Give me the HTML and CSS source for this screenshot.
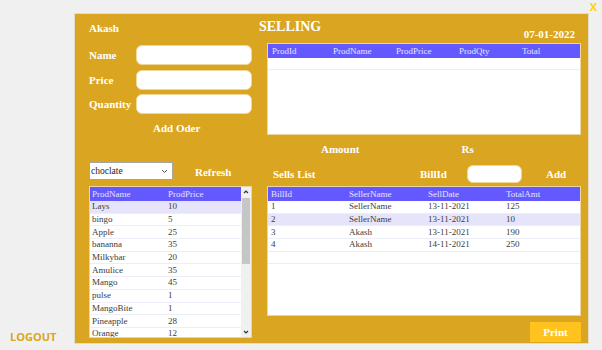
FILE: index.html
```html
<!DOCTYPE html>
<html>
<head>
  <meta name="viewport" content="width=device-width, initial-scale=1.0">
  <title>Selling</title>
  <link rel="stylesheet" href="styles.css">
</head>
<body>
  <div class="topbar"><span class="close">X</span></div>

  <div class="main">
    <div class="side">
      <span class="logout">LOGOUT</span>
    </div>

    <div class="panel">
      <!-- kolom kiri: form + daftar produk -->
      <div class="col-left">
        <div class="user">Akash</div>
        <div class="form">
          <div class="form-row"><label>Name</label><div class="input"></div></div>
          <div class="form-row"><label>Price</label><div class="input"></div></div>
          <div class="form-row"><label>Quantity</label><div class="input"></div></div>
        </div>
        <div class="add-order">Add Oder</div>

        <div class="filter">
          <div class="select">
            <span>choclate</span>
            <svg width="7" height="5" viewBox="0 0 7 5"><path d="M1 1l2.5 2.5L6 1" fill="none" stroke="#555" stroke-width="1"/></svg>
          </div>
          <span class="refresh">Refresh</span>
        </div>

        <div class="grid prod-list">
          <div class="grid-body">
            <div class="row head"><span>ProdName</span><span>ProdPrice</span></div>
            <div class="row sel"><span>Lays</span><span>10</span></div>
            <div class="row"><span>bingo</span><span>5</span></div>
            <div class="row"><span>Apple</span><span>25</span></div>
            <div class="row"><span>bananna</span><span>35</span></div>
            <div class="row"><span>Milkybar</span><span>20</span></div>
            <div class="row"><span>Amulice</span><span>35</span></div>
            <div class="row"><span>Mango</span><span>45</span></div>
            <div class="row"><span>pulse</span><span>1</span></div>
            <div class="row"><span>MangoBite</span><span>1</span></div>
            <div class="row"><span>Pineapple</span><span>28</span></div>
            <div class="row"><span>Orange</span><span>12</span></div>
          </div>
          <div class="scrollbar">
            <svg width="10" height="10" viewBox="0 0 10 10"><path d="M3 6l2-2 2 2" fill="none" stroke="#333" stroke-width="1.2"/></svg>
            <div class="thumb"></div>
            <svg width="10" height="10" viewBox="0 0 10 10"><path d="M3 4l2 2 2-2" fill="none" stroke="#333" stroke-width="1.2"/></svg>
          </div>
        </div>
      </div>

      <!-- kolom kanan: keranjang + daftar penjualan -->
      <div class="col-right">
        <div class="title">
          <h1>SELLING</h1>
          <span class="date">07-01-2022</span>
        </div>

        <div class="grid cart">
          <div class="grid-body">
            <div class="row head"><span>ProdId</span><span>ProdName</span><span>ProdPrice</span><span>ProdQty</span><span>Total</span></div>
            <div class="row"></div>
          </div>
        </div>

        <div class="amount">
          <span class="amt-label">Amount</span>
          <span class="amt-rs">Rs</span>
        </div>

        <div class="sells-bar">
          <span class="sells-title">Sells List</span>
          <span class="bill-label">BillId</span>
          <div class="input small"></div>
          <span class="add">Add</span>
        </div>

        <div class="grid sells">
          <div class="grid-body">
            <div class="row head"><span>BillId</span><span>SellerName</span><span>SellDate</span><span>TotalAmt</span></div>
            <div class="row"><span>1</span><span>SellerName</span><span>13-11-2021</span><span>125</span></div>
            <div class="row sel"><span>2</span><span>SellerName</span><span>13-11-2021</span><span>10</span></div>
            <div class="row"><span>3</span><span>Akash</span><span>13-11-2021</span><span>190</span></div>
            <div class="row"><span>4</span><span>Akash</span><span>14-11-2021</span><span>250</span></div>
            <div class="row"></div>
          </div>
        </div>

        <div class="print-row">
          <button class="print">Print</button>
        </div>
      </div>
    </div>
  </div>
</body>
</html>
```

FILE: styles.css
```css
html, body {
  margin: 0;
  padding: 0;
}
body {
  width: 602px;
  height: 350px;
  overflow: hidden;
  background-color: #f0f0f0;
  font-family: "Liberation Serif", serif;
  color: #ffffff;
}
.topbar {
  height: 13px;
  display: flex;
  justify-content: flex-end;
}
.close {
  font-family: "Open Sans", sans-serif;
  font-weight: bold;
  font-size: 11px;
  line-height: 13px;
  color: #ffd20a;
  padding-right: 5px;
}
.main {
  display: flex;
}
.side {
  width: 74px;
  height: 331px;
  display: flex;
  align-items: flex-end;
}
.logout {
  font-family: "Open Sans", sans-serif;
  font-weight: bold;
  font-size: 11px;
  line-height: 14px;
  color: #daa520;
  padding-left: 10px;
}
.panel {
  box-sizing: border-box;
  width: 515px;
  height: 331px;
  background-color: #daa520;
  border: 1px solid #e2dccb;
  padding: 3px 6px 0 14px;
  display: flex;
  gap: 15px;
}
.col-left {
  width: 163px;
  display: flex;
  flex-direction: column;
}
.col-right {
  width: 314px;
  display: flex;
  flex-direction: column;
}
.user, .form-row label, .add-order, .refresh,
.amount span, .sells-bar span {
  font-weight: bold;
  font-size: 11px;
}
.user {
  margin-top: 3px;
  line-height: 16px;
}
.form {
  margin-top: 9px;
  display: flex;
  flex-direction: column;
  gap: 4.5px;
}
.form-row {
  display: flex;
  align-items: center;
  height: 20px;
}
.form-row label {
  width: 47px;
}
.input {
  box-sizing: border-box;
  width: 116px;
  height: 20px;
  background-color: #ffffff;
  border: 1px solid #eed79a;
  border-radius: 6px;
}
.input.small {
  width: 55px;
  height: 18px;
}
.add-order {
  margin-top: 6px;
  line-height: 16px;
  padding-left: 64px;
}
.filter {
  margin-top: 26px;
  display: flex;
  align-items: center;
  height: 18px;
}
.select {
  box-sizing: border-box;
  width: 84px;
  height: 18px;
  background-color: #ffffff;
  border: 1px solid #a5a5a5;
  display: flex;
  align-items: center;
  justify-content: space-between;
  padding: 0 4px 0 1px;
  color: #222;
  font-size: 9.5px;
}
.refresh {
  margin-left: 22px;
  margin-top: 2px;
}
.grid {
  box-sizing: border-box;
  background-color: #ffffff;
  border: 1px solid #e9d6a2;
  display: flex;
  overflow: hidden;
}
.grid-body {
  flex: 1;
}
.row {
  box-sizing: border-box;
  height: 12.7px;
  display: grid;
  align-items: center;
  font-size: 9px;
  line-height: 11px;
  color: #3c3c3c;
  border-bottom: 1px solid #eeeef8;
  white-space: nowrap;
}
.row.head {
  height: 14px;
  background-color: #6459ff;
  color: #e6e4ff;
  border-bottom: none;
}
.row.sel {
  background-color: #e6e4fa;
}
.prod-list {
  margin-top: 6px;
  height: 152px;
}
.prod-list .row {
  grid-template-columns: 76px 1fr;
  padding-left: 2px;
}
.scrollbar {
  width: 10px;
  background-color: #f0f0f0;
  display: flex;
  flex-direction: column;
}
.scrollbar svg {
  flex: none;
}
.thumb {
  height: 66px;
  margin: 1px 1px 0;
  background-color: #c6c6c6;
}
.scrollbar svg:last-child {
  margin-top: auto;
}
.title {
  height: 26px;
  display: flex;
  justify-content: space-between;
  align-items: flex-end;
}
h1 {
  margin: 0 0 0 -8px;
  align-self: flex-start;
  font-size: 14px;
  line-height: 18px;
  padding-top: 1px;
}
.date {
  font-weight: bold;
  font-size: 11px;
  line-height: 12px;
  margin-right: 6px;
  margin-bottom: 3px;
}
.cart {
  height: 92px;
}
.cart .row {
  grid-template-columns: 61px 63px 63px 63px 1fr;
  padding-left: 4px;
}
.cart .row:not(.head) {
  height: 12px;
}
.amount {
  height: 27px;
  display: flex;
  align-items: center;
}
.amt-label {
  margin-left: 54px;
}
.amt-rs {
  margin-left: 102px;
}
.sells-bar {
  height: 24px;
  display: flex;
  align-items: center;
}
.sells-title {
  margin-left: 6px;
  width: 147px;
}
.bill-label {
  width: 47px;
}
.add {
  margin-left: 24px;
}
.sells {
  height: 130px;
}
.sells .row {
  grid-template-columns: 78px 79px 78px 1fr;
  padding-left: 3px;
}
.print-row {
  margin-top: 6px;
  display: flex;
  justify-content: flex-end;
}
.print {
  width: 51px;
  height: 20px;
  border: none;
  background-color: #ffc21f;
  color: #ffffff;
  font-family: "Liberation Serif", serif;
  font-weight: bold;
  font-size: 11px;
  padding: 0;
}
```
